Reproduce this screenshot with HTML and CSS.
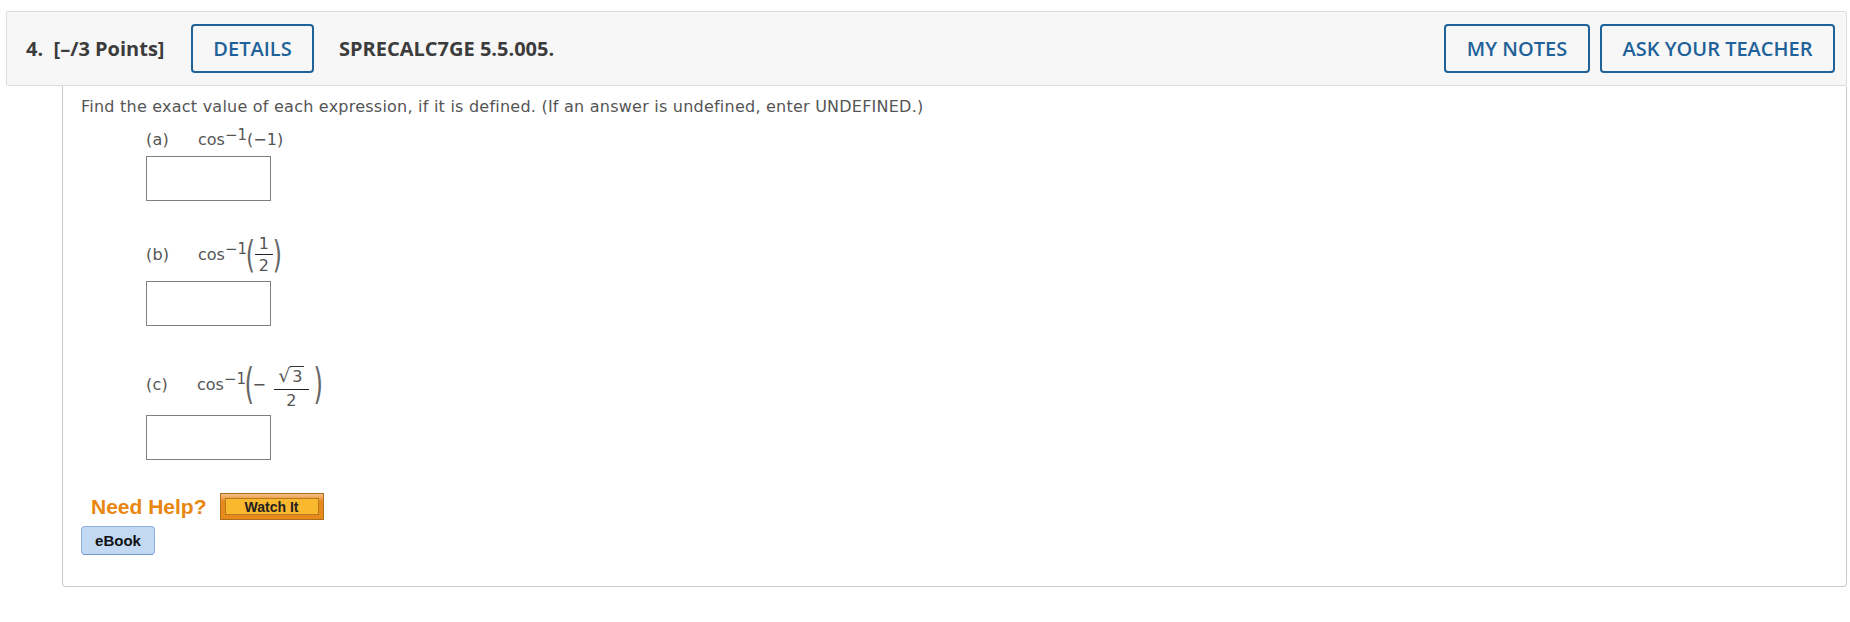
FILE: index.html
```html
<!DOCTYPE html>
<html>
<head>
    <meta charset="UTF-8">
    <title>SPRECALC7GE 5.5.005.</title>
    <link rel="stylesheet" href="styles.css">
</head>
<body>
    <div class="question">
        <div class="header">
            <span class="points">4.&nbsp; [&ndash;/3 Points]</span>
            <button class="headerBtn detailsBtn">DETAILS</button>
            <span class="code">SPRECALC7GE 5.5.005.</span>
            <button class="headerBtn notesBtn">MY NOTES</button>
            <button class="headerBtn askBtn">ASK YOUR TEACHER</button>
        </div>

        <div class="content">
            <p class="intro">Find the exact value of each expression, if it is defined. (If an answer is undefined, enter UNDEFINED.)</p>

            <div class="part partA">
                <div class="expr">
                    <span class="letter">(a)</span>
                    <span class="math">cos<sup class="power">&minus;1</sup>(&minus;1)</span>
                </div>
                <input class="answer" type="text">
            </div>

            <div class="part partB">
                <div class="expr">
                    <span class="letter">(b)</span>
                    <span class="math">cos<sup class="power">&minus;1</sup><span class="paren">(</span><span class="frac"><span class="num">1</span><span class="den">2</span></span><span class="paren">)</span></span>
                </div>
                <input class="answer" type="text">
            </div>

            <div class="part partC">
                <div class="expr">
                    <span class="letter">(c)</span>
                    <span class="math mathC">cos<sup class="power">&minus;1</sup><span class="paren">(</span><span class="minus">&minus;</span><span class="frac fracWide"><span class="num"><span class="root">&radic;</span><span class="radicand">3</span></span><span class="den">2</span></span><span class="paren">)</span></span>
                </div>
                <input class="answer" type="text">
            </div>

            <div class="help">
                <span class="needHelp">Need Help?</span>
                <button class="watchBtn"><span class="watchInner">Watch It</span></button>
            </div>
            <button class="ebookBtn">eBook</button>
        </div>
    </div>
</body>
</html>
```

FILE: styles.css
```css
body {
    margin: 0;
    background-color: #fff;
    color: #555;
    font-family: "DejaVu Sans", sans-serif;
    font-size: 16px;
    letter-spacing: 0.23px;
}

button {
    cursor: pointer;
}

.question {
    padding: 11px 3px 0 6px;
}

.header {
    display: flex;
    align-items: center;
    height: 75px;
    box-sizing: border-box;
    padding: 0 11px 0 19px;
    background-color: #f7f7f7;
    border: 1px solid #ddd;
    border-radius: 2px;
    font-family: "Open Sans", sans-serif;
    letter-spacing: 0;
    color: #3c3c3c;
}

.points,
.code {
    font-size: 20px;
    font-weight: 700;
}

.points {
    width: 165px;
}

.code {
    flex: 1;
    margin-left: 25px;
}

.headerBtn {
    height: 49px;
    padding: 0;
    background-color: transparent;
    border: 2px solid #1f6299;
    border-radius: 4px;
    color: #1f6299;
    font-family: "Open Sans", sans-serif;
    font-size: 20px;
    font-weight: 600;
}

.detailsBtn {
    width: 123px;
}

.notesBtn {
    width: 146px;
    margin-right: 10px;
}

.askBtn {
    width: 235px;
}

.content {
    margin-left: 56px;
    height: 501px;
    box-sizing: border-box;
    padding: 10px 0 0 18px;
    border: 1px solid #ccc;
    border-top: 0;
    border-radius: 0 0 4px 4px;
}

.intro {
    margin: 0;
    line-height: 22px;
}

.part {
    margin-left: 65px;
}

.partA {
    margin-top: 6px;
}

.partB {
    margin-top: 30px;
}

.partC {
    margin-top: 31px;
}

.expr {
    display: flex;
    align-items: center;
    height: 30px;
    margin-bottom: 2px;
}

.partB .expr {
    height: 46px;
    margin-bottom: 4px;
}

.partC .expr {
    height: 54px;
    margin-bottom: 4px;
}

.letter {
    width: 52px;
}

.math {
    display: inline-flex;
    align-items: center;
    white-space: nowrap;
    letter-spacing: 0;
}

.mathC {
    margin-left: -1px;
}

.power {
    font-size: 15px;
    line-height: 1;
    margin-top: -7px;
    vertical-align: baseline;
}

.partB .power,
.partC .power {
    margin-top: -10px;
}

.paren {
    font-size: 38px;
    line-height: 42px;
    color: #666;
    transform: scaleX(0.62);
    margin: 0 -4px;
}

.partC .paren {
    font-size: 42px;
    line-height: 46px;
    transform: scaleX(0.58);
    margin: 2px -5px 0;
}

.frac {
    display: inline-flex;
    flex-direction: column;
    align-items: center;
    min-width: 18px;
    font-size: 16px;
    line-height: 21px;
    margin: 0 1px;
}

.fracWide {
    min-width: 35px;
    margin: 6px 6px 0 8px;
}

.num {
    align-self: stretch;
    text-align: center;
    border-bottom: 1px solid #222;
    white-space: nowrap;
}

.fracWide .num {
    line-height: 24px;
}

.root {
    font-size: 19px;
}

.radicand {
    border-top: 1px solid #333;
    padding: 0 2px;
}

.minus {
    margin-left: 0;
}

.answer {
    display: block;
    width: 125px;
    height: 45px;
    box-sizing: border-box;
    background-color: #fff;
    border: 1px solid #808080;
    border-radius: 0;
}

.help {
    display: flex;
    align-items: center;
    margin: 33px 0 0 10px;
    letter-spacing: 0;
}

.needHelp {
    font-family: "Liberation Sans", sans-serif;
    font-size: 21px;
    font-weight: 700;
    color: #e8860f;
}

.watchBtn {
    width: 104px;
    height: 27px;
    margin-left: 13px;
    padding: 4px;
    background: linear-gradient(#f6c08a, #e8891c 30%);
    border: 1px solid #b06f1d;
}

.watchInner {
    display: block;
    height: 100%;
    box-sizing: border-box;
    background-color: #f9b82e;
    border: 1px solid #b5791f;
    font-family: "Liberation Sans", sans-serif;
    font-size: 14px;
    font-weight: 700;
    line-height: 17px;
    color: #222;
}

.ebookBtn {
    display: block;
    width: 74px;
    height: 29px;
    margin-top: 6px;
    padding: 0;
    background-color: #c2d8f3;
    border: 1px solid #8eb0de;
    border-bottom-color: #6f96cf;
    border-radius: 4px;
    font-family: "Liberation Sans", sans-serif;
    font-size: 15px;
    font-weight: 700;
    letter-spacing: 0;
    color: #111;
}
```
